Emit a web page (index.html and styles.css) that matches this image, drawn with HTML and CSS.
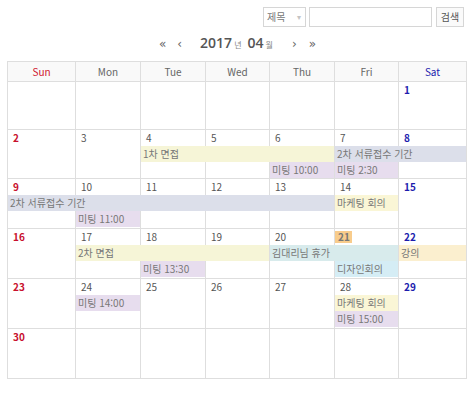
FILE: index.html
```html
<!DOCTYPE html>
<html lang="ko">
<head>
<meta charset="utf-8">
<title>Calendar</title>
<link rel="stylesheet" href="styles.css">
</head>
<body>
<div class="toolbar">
  <div class="select"><span>제목</span><span class="caret">▾</span></div>
  <div class="input"></div>
  <div class="button">검색</div>
</div>
<div class="nav">
  <span class="arrow a-first">«</span>
  <span class="arrow a-prev">‹</span>
  <span class="year">2017</span><span class="unit">년</span>
  <span class="month">04</span><span class="unit">월</span>
  <span class="arrow a-next">›</span>
  <span class="arrow a-last">»</span>
</div>
<div class="cal">
  <div class="head">
    <div class="hcell sun">Sun</div>
    <div class="hcell">Mon</div>
    <div class="hcell">Tue</div>
    <div class="hcell">Wed</div>
    <div class="hcell">Thu</div>
    <div class="hcell">Fri</div>
    <div class="hcell sat">Sat</div>
  </div>
  <div class="week w1">
    <div class="cell c1"></div><div class="cell c2"></div><div class="cell c3"></div><div class="cell c4"></div><div class="cell c5"></div><div class="cell c6"></div><div class="cell c7"><span class="num sat">1</span></div>
  </div>
  <div class="week w2">
    <div class="cell c1"><span class="num sun">2</span></div><div class="cell c2"><span class="num">3</span></div><div class="cell c3"><span class="num">4</span></div><div class="cell c4"><span class="num">5</span></div><div class="cell c5"><span class="num">6</span></div><div class="cell c6"><span class="num">7</span></div><div class="cell c7"><span class="num sat">8</span></div>
    <div class="ev l1 yellow s3 e6">1차 면접</div>
    <div class="ev l1 slate s6 e8">2차 서류접수 기간</div>
    <div class="ev l2 purple s5 e6">미팅 10:00</div>
    <div class="ev l2 purple s6 e7">미팅 2:30</div>
  </div>
  <div class="week w3">
    <div class="cell c1"><span class="num sun">9</span></div><div class="cell c2"><span class="num">10</span></div><div class="cell c3"><span class="num">11</span></div><div class="cell c4"><span class="num">12</span></div><div class="cell c5"><span class="num">13</span></div><div class="cell c6"><span class="num">14</span></div><div class="cell c7"><span class="num sat">15</span></div>
    <div class="ev l1 slate s1 e6">2차 서류접수 기간</div>
    <div class="ev l1 cream s6 e7">마케팅 회의</div>
    <div class="ev l2 purple s2 e3">미팅 11:00</div>
  </div>
  <div class="week">
    <div class="cell c1"><span class="num sun">16</span></div><div class="cell c2"><span class="num">17</span></div><div class="cell c3"><span class="num">18</span></div><div class="cell c4"><span class="num">19</span></div><div class="cell c5"><span class="num">20</span></div><div class="cell c6"><span class="num today">21</span></div><div class="cell c7"><span class="num sat">22</span></div>
    <div class="ev l1 yellow s2 e5">2차 면접</div>
    <div class="ev l1 teal s5 e7">김대리님 휴가</div>
    <div class="ev l1 peach s7 e8">강의</div>
    <div class="ev l2 purple s3 e4">미팅 13:30</div>
    <div class="ev l2 sky s6 e7">디자인회의</div>
  </div>
  <div class="week">
    <div class="cell c1"><span class="num sun">23</span></div><div class="cell c2"><span class="num">24</span></div><div class="cell c3"><span class="num">25</span></div><div class="cell c4"><span class="num">26</span></div><div class="cell c5"><span class="num">27</span></div><div class="cell c6"><span class="num">28</span></div><div class="cell c7"><span class="num sat">29</span></div>
    <div class="ev l1 purple s2 e3">미팅 14:00</div>
    <div class="ev l1 cream s6 e7">마케팅 회의</div>
    <div class="ev l2 purple s6 e7">미팅 15:00</div>
  </div>
  <div class="week last">
    <div class="cell c1"><span class="num sun">30</span></div><div class="cell c2"></div><div class="cell c3"></div><div class="cell c4"></div><div class="cell c5"></div><div class="cell c6"></div><div class="cell c7"></div>
  </div>
</div>
</body>
</html>
```
FILE: styles.css
```css
* { box-sizing: border-box; }
body {
  margin: 0;
  padding: 7px 0 0 0;
  font-family: "Noto Sans CJK KR", "Noto Sans", sans-serif;
  color: #555;
  background: #fff;
}
.toolbar {
  display: flex;
  justify-content: flex-end;
  padding-right: 10px;
  height: 20px;
}
.select {
  width: 43px;
  height: 20px;
  border: 1px solid #d6d6d6;
  display: flex;
  align-items: center;
  justify-content: space-between;
  padding: 0 4px 0 3px;
  font-size: 10px;
  line-height: 18px;
  color: #777;
}
.caret { color: #c4c4c4; font-size: 8px; }
.input {
  width: 123px;
  height: 20px;
  margin-left: 3px;
  border: 1px solid #d6d6d6;
}
.button {
  width: 28px;
  height: 20px;
  margin-left: 4px;
  border: 1px solid #d6d6d6;
  background: #fafafa;
  font-size: 10px;
  line-height: 18px;
  text-align: center;
  color: #555;
}
.nav {
  margin-top: 6px;
  height: 20px;
  display: flex;
  justify-content: center;
  align-items: baseline;
  line-height: 20px;
  padding-left: 1px;
}
.arrow {
  font-family: "DejaVu Sans", sans-serif;
  font-size: 12px;
  color: #666;
}
.a-prev { margin-left: 11px; margin-right: 18px; }
.a-next { margin-left: 19px; margin-right: 12px; }
.year, .month {
  font-family: "Open Sans", sans-serif;
  font-weight: 600;
  font-size: 14px;
  color: #555;
}
.month { margin-left: 6px; }
.unit {
  font-size: 8px;
  color: #888;
  margin-left: 2px;
}
.cal {
  margin: 8px 0 0 7px;
  width: 460px;
  border-right: 1px solid #dedede;
  border-bottom: 1px solid #dedede;
}
.head, .week {
  display: grid;
  grid-template-columns: 68px 65px 65px 64px 65px 64px 68px;
  border-top: 1px solid #dedede;
}
.head { height: 20px; background: #f9f9f9; }
.hcell {
  border-left: 1px solid #dedede;
  text-align: center;
  font-size: 10px;
  line-height: 19px;
  color: #666;
}
.hcell.sun { color: #d0152e; }
.hcell.sat { color: #1d1dae; }
.week {
  height: 50px;
  grid-template-rows: 16px 16px 16px 1fr;
}
.week.w1 { height: 48px; }
.week.w2 { height: 49px; }
.cell {
  grid-row: 1 / -1;
  border-left: 1px solid #dedede;
  padding: 1px 0 0 5px;
  font-size: 10px;
  line-height: 14px;
}
.c1 { grid-column: 1; } .c2 { grid-column: 2; } .c3 { grid-column: 3; } .c4 { grid-column: 4; }
.c5 { grid-column: 5; } .c6 { grid-column: 6; } .c7 { grid-column: 7; }
.num {
  display: inline-block;
  vertical-align: top;
  font-size: 10px;
  line-height: 14px;
  color: #555;
}
.num.sun { color: #c8102e; font-weight: 700; }
.num.sat { color: #1d1dae; font-weight: 700; }
.num.today {
  background: #f8cc8c;
  margin: 1px 0 0 -5px;
  padding: 0 2px 0 3px;
  line-height: 12px;
  font-weight: 700;
  color: #777;
}
.ev {
  margin-left: 1px;
  font-size: 10px;
  line-height: 16px;
  padding-left: 2px;
  color: #777;
  white-space: nowrap;
  overflow: hidden;
}
.l1 { grid-row: 2; }
.l2 { grid-row: 3; }
.s1 { grid-column-start: 1; } .s2 { grid-column-start: 2; } .s3 { grid-column-start: 3; }
.s5 { grid-column-start: 5; } .s6 { grid-column-start: 6; } .s7 { grid-column-start: 7; }
.e3 { grid-column-end: 3; } .e4 { grid-column-end: 4; } .e5 { grid-column-end: 5; }
.e6 { grid-column-end: 6; } .e7 { grid-column-end: 7; } .e8 { grid-column-end: 8; }
.yellow { background: #f6f5d7; }
.slate { background: #dcdfea; }
.purple { background: #e7ddee; }
.cream { background: #faf6d6; }
.teal { background: #d8ebec; }
.sky { background: #d5edf5; }
.peach { background: #fbefcf; }
```
